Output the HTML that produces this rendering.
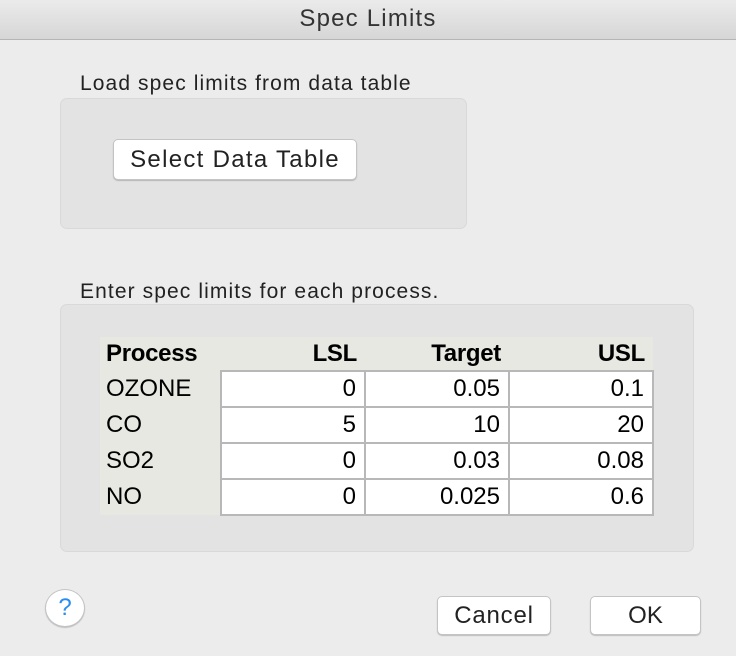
<!DOCTYPE html>
<html><head><style>
*{margin:0;padding:0;box-sizing:border-box}
body{width:736px;height:656px;background:#ececec;font-family:"Liberation Sans",sans-serif;position:relative;overflow:hidden;color:#222}
.title{position:absolute;left:0;top:0;width:736px;height:40px;background:linear-gradient(#ebebeb,#d6d6d6);border-bottom:1px solid #b5b5b5;text-align:center;font-size:24px;letter-spacing:1.2px;line-height:38px;color:#333}
.lbl{position:absolute;left:80px;font-size:21px;letter-spacing:1.1px;color:#222}
.box{position:absolute;background:#e3e3e3;border:1px solid #d9d9d9;border-radius:7px}
.btn{position:absolute;background:#fff;border:1px solid #c4c4c4;border-radius:5px;box-shadow:0 1px 1px rgba(0,0,0,.2);text-align:center;font-size:24px;color:#222}
table{position:absolute;left:100px;top:337px;border-collapse:collapse;font-size:24px;color:#000}
td{height:36px;padding:0 8px;text-align:right}
th{height:34px;padding:0 8px;text-align:right;background:#e8e8e2;font-weight:bold;letter-spacing:-0.3px}
th:first-child,td.p{text-align:left;background:#e8e8e2;width:121px;padding-left:6px;border:none}
td.c{background:#fff;border:2px solid #b8b8b8;width:144px}
.help{position:absolute;left:45px;top:589px;width:40px;height:38px;border-radius:50%;background:#fff;border:1px solid #c4c4c4;box-shadow:0 1px 1px rgba(0,0,0,.2);color:#2a8cf0;font-size:24px;text-align:center;line-height:36px}
</style></head><body>
<div class="title">Spec Limits</div>
<div class="lbl" style="top:72px">Load spec limits from data table</div>
<div class="box" style="left:60px;top:98px;width:407px;height:131px"></div>
<div class="btn" style="left:113px;top:139px;width:244px;height:41px;line-height:39px;letter-spacing:1.3px">Select Data Table</div>
<div class="lbl" style="top:280px">Enter spec limits for each process.</div>
<div class="box" style="left:60px;top:304px;width:634px;height:248px"></div>
<table>
<tr><th>Process</th><th>LSL</th><th>Target</th><th>USL</th></tr>
<tr><td class="p">OZONE</td><td class="c">0</td><td class="c">0.05</td><td class="c">0.1</td></tr>
<tr><td class="p">CO</td><td class="c">5</td><td class="c">10</td><td class="c">20</td></tr>
<tr><td class="p">SO2</td><td class="c">0</td><td class="c">0.03</td><td class="c">0.08</td></tr>
<tr><td class="p">NO</td><td class="c">0</td><td class="c">0.025</td><td class="c">0.6</td></tr>
</table>
<div class="help">?</div>
<div class="btn" style="left:437px;top:596px;width:114px;height:39px;line-height:37px;letter-spacing:0.8px">Cancel</div>
<div class="btn" style="left:590px;top:596px;width:111px;height:39px;line-height:37px">OK</div>
</body></html>
